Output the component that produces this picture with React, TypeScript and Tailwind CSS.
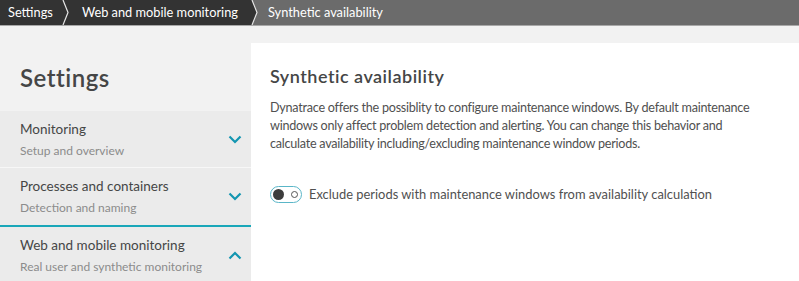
import React from 'react';

const font = { fontFamily: 'Lato, "Noto Sans", sans-serif' };

const Sep: React.FC<{ next?: string }> = ({ next = '#333333' }) => (
  <svg width="10" height="25" viewBox="0 0 10 25" className="shrink-0 block">
    <rect x="0" y="0" width="10" height="25" fill={next} />
    <path d="M0 0 H2 L7 12.5 L2 25 H0 Z" fill="#333333" />
    <path d="M2 0 L7 12.5 L2 25" fill="none" stroke="#e6e6e6" strokeWidth="1.2" />
  </svg>
);

const Chevron: React.FC<{ up?: boolean }> = ({ up }) => (
  <svg width="14" height="9" viewBox="0 0 14 9" className="shrink-0">
    <path
      d={up ? 'M1.5 7.5 L7 2 L12.5 7.5' : 'M1.5 1.5 L7 7 L12.5 1.5'}
      fill="none"
      stroke="#1496b1"
      strokeWidth="2.2"
    />
  </svg>
);

const navItems = [
  { title: 'Monitoring', sub: 'Setup and overview', open: false, h: 'h-[56px]' },
  { title: 'Processes and containers', sub: 'Detection and naming', open: false, h: 'h-[60px]' },
  { title: 'Web and mobile monitoring', sub: 'Real user and synthetic monitoring', open: true, h: 'h-[56px]' },
];

export default function App() {
  return (
    <div className="w-[799px] h-[281px] overflow-hidden bg-[#f2f2f2] flex flex-col" style={font}>
      {/* breadcrumb */}
      <div className="h-[26px] flex items-stretch text-[12.8px] text-white border-b border-[#a8a8a8] shrink-0">
        <div className="flex items-center bg-[#333333]">
          <span className="pl-[8px] pr-[8px]">Settings</span>
          <Sep />
          <span className="pl-[11px] pr-[12px]">Web and mobile monitoring</span>
          <Sep next="#6b6b6b" />
        </div>
        <div className="flex-1 flex items-center bg-[#6b6b6b] pl-[8px]">
          <span>Synthetic availability</span>
        </div>
      </div>

      <div className="flex flex-1 pt-[17px]">
        {/* sidebar */}
        <aside className="w-[251px] shrink-0 flex flex-col">
          <h1 className="text-[24px] font-semibold text-[#454646] pl-[20px] pt-[19px] pb-[18px] leading-[31px] tracking-[0.5px]">
            Settings
          </h1>
          {navItems.map((item, i) => (
            <div
              key={item.title}
              className={`bg-[#ebebeb] flex items-center pl-[20px] pr-[9px] ${item.h} ${
                i === 1 ? 'border-t border-[#f7f7f7] border-b-2 border-b-[#19a7b9]' : ''
              }`}
            >
              <div className="flex-1">
                <div className="text-[13.5px] text-[#454646] leading-[20px]">{item.title}</div>
                <div className="text-[12px] text-[#8c8c8c] leading-[18px] mt-[3px]">{item.sub}</div>
              </div>
              <Chevron up={item.open} />
            </div>
          ))}
        </aside>

        {/* content */}
        <main className="flex-1 bg-white pl-[19px] pt-[21px] pr-[20px]">
          <h2 className="text-[18px] font-semibold text-[#454646] leading-[25px] tracking-[0.5px]">Synthetic availability</h2>
          <p className="mt-[10px] text-[12.6px] tracking-[-0.25px] text-[#505050] leading-[18px] max-w-[480px]">
            Dynatrace offers the possiblity to configure maintenance windows. By default maintenance windows only
            affect problem detection and alerting. You can change this behavior and calculate availability
            including/excluding maintenance window periods.
          </p>
          <div className="mt-[32px] flex items-center gap-[7px]">
            <div className="w-[32px] h-[17px] rounded-full border-[1.5px] border-[#5ab6c8] flex items-center justify-between px-[2px]">
              <span className="w-[11px] h-[11px] rounded-full bg-[#3c3c3c]" />
              <span className="w-[7px] h-[7px] rounded-full border border-[#555555] mr-[1px]" />
            </div>
            <span className="text-[12.9px] text-[#505050]">
              Exclude periods with maintenance windows from availability calculation
            </span>
          </div>
        </main>
      </div>
    </div>
  );
}
